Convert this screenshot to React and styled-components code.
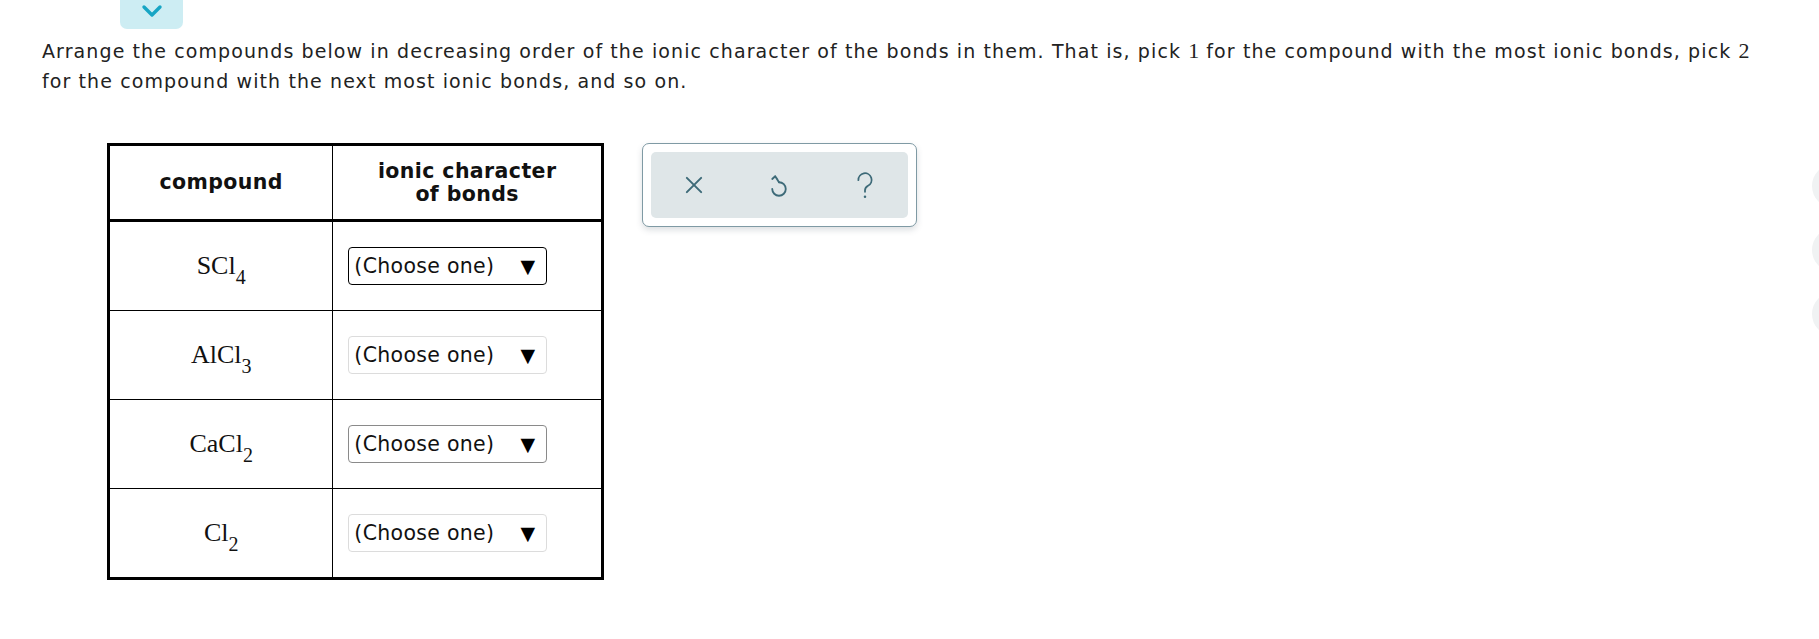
import React from "react";
import styled, { createGlobalStyle } from "styled-components";

const Global = createGlobalStyle`
  html, body { margin: 0; padding: 0; background: #fff; overflow: hidden; }
  body { font-family: "DejaVu Sans", Verdana, sans-serif; color: #222; }
`;

const Page = styled.div`
  display: flex;
  width: 1819px;
  height: 639px;
  overflow: hidden;
`;

const Main = styled.div`
  flex: 1;
  display: flex;
  flex-direction: column;
  padding-left: 42px;
`;

const TopTab = styled.button`
  margin-left: 78px;
  width: 63px;
  height: 29px;
  border: none;
  padding: 0;
  background: #cdedf3;
  border-radius: 0 0 7px 7px;
  display: flex;
  align-items: center;
  justify-content: center;
  padding-bottom: 8px;
`;

const Prompt = styled.p`
  margin: 7px 0 0 0;
  width: 1730px;
  font-size: 19px;
  letter-spacing: 1.1px;
  line-height: 30px;
  color: #222;
`;

const MathNum = styled.span`
  font-family: "Liberation Serif", "Times New Roman", serif;
  font-size: 22px;
  letter-spacing: 0;
`;

const Content = styled.div`
  display: flex;
  align-items: flex-start;
  margin-top: 47px;
  margin-left: 65px;
  gap: 38px;
`;

const Table = styled.table`
  border-collapse: collapse;
  border: 3px solid #000;
  width: 497px;
`;

const HeadCell = styled.th`
  width: ${(p) => p.$w}px;
  height: 73px;
  border: 1px solid #000;
  border-bottom: 3px solid #000;
  font-size: 20.5px;
  letter-spacing: 0.4px;
  font-weight: bold;
  line-height: 23px;
  color: #111;
  text-align: center;
  vertical-align: middle;
  padding: 0;
`;

const Cell = styled.td`
  height: 88px;
  border: 1px solid #000;
  padding: 0;
  vertical-align: middle;
  text-align: ${(p) => (p.$left ? "left" : "center")};
  padding-left: ${(p) => (p.$left ? "15px" : "0")};
`;

const Formula = styled.span`
  font-family: "Liberation Serif", "Times New Roman", serif;
  font-size: 26px;
  color: #111;
  sub {
    font-size: 20px;
    vertical-align: -10px;
    line-height: 0;
  }
`;

const Select = styled.div`
  box-sizing: border-box;
  width: 199px;
  height: 38px;
  display: inline-flex;
  align-items: center;
  justify-content: space-between;
  padding: 0 11px 0 5px;
  border: ${(p) =>
    p.$state === "focus"
      ? "1.5px solid #000"
      : p.$state === "hover"
      ? "1px solid #8a8a8a"
      : "1px solid #dcdcdc"};
  border-radius: 4px;
  background: #fff;
  font-size: 20.5px;
  letter-spacing: 0.3px;
  color: #111;
`;

const Arrow = styled.span`
  font-size: 19px;
  color: #000;
  line-height: 1;
`;

const ToolFrame = styled.div`
  box-sizing: border-box;
  width: 275px;
  height: 84px;
  border: 1px solid #7f9aa4;
  border-radius: 7px;
  background: #fff;
  padding: 8px;
  box-shadow: 0 3px 6px rgba(60, 80, 90, 0.18);
`;

const ToolInner = styled.div`
  height: 100%;
  background: #dfe6e8;
  border-radius: 5px;
  display: grid;
  grid-template-columns: repeat(3, 1fr);
  align-items: center;
  justify-items: center;
`;

const ToolBtn = styled.button`
  border: none;
  background: transparent;
  padding: 0;
  display: flex;
  align-items: center;
  justify-content: center;
  width: 34px;
  height: 36px;
`;

const SideRail = styled.div`
  width: 7px;
  overflow: hidden;
  padding-top: 164px;
  display: flex;
  flex-direction: column;
  gap: 20px;
`;

const SideDot = styled.div`
  flex: none;
  width: 44px;
  height: 44px;
  border-radius: 50%;
  background: #f0f2f3;
`;

const rows = [
  { f: "SCl", s: "4", state: "focus" },
  { f: "AlCl", s: "3", state: "idle" },
  { f: "CaCl", s: "2", state: "hover" },
  { f: "Cl", s: "2", state: "idle" },
];

const ICON = "#3d6a78";

export default function App() {
  return (
    <Page>
      <Global />
      <Main>
        <TopTab aria-label="collapse">
          <svg width="22" height="14" viewBox="0 0 22 14">
            <path d="M3 3 L11 11 L19 3" fill="none" stroke="#17a5c4" strokeWidth="3.4" strokeLinecap="round" strokeLinejoin="round" />
          </svg>
        </TopTab>
        <Prompt>
          Arrange the compounds below in decreasing order of the ionic character of the bonds in them. That is, pick <MathNum>1</MathNum> for the compound with the most ionic bonds, pick <MathNum>2</MathNum> for the compound with the next most ionic bonds, and so on.
        </Prompt>
        <Content>
          <Table>
            <thead>
              <tr>
                <HeadCell $w={223}>compound</HeadCell>
                <HeadCell $w={268}>
                  ionic character
                  <br />
                  of bonds
                </HeadCell>
              </tr>
            </thead>
            <tbody>
              {rows.map((r) => (
                <tr key={r.f + r.s}>
                  <Cell>
                    <Formula>
                      {r.f}
                      <sub>{r.s}</sub>
                    </Formula>
                  </Cell>
                  <Cell $left>
                    <Select $state={r.state}>
                      <span>(Choose one)</span>
                      <Arrow>▼</Arrow>
                    </Select>
                  </Cell>
                </tr>
              ))}
            </tbody>
          </Table>
          <ToolFrame>
            <ToolInner>
              <ToolBtn aria-label="clear">
                <svg width="22" height="22" viewBox="0 0 20 20">
                  <path d="M3.5 3.5 L16.5 16.5 M16.5 3.5 L3.5 16.5" stroke={ICON} strokeWidth="1.8" strokeLinecap="round" />
                </svg>
              </ToolBtn>
              <ToolBtn aria-label="undo">
                <svg width="24" height="31" viewBox="0 0 22 26">
                  <path d="M11 10 A6.2 6.2 0 1 1 4.8 16.2" fill="none" stroke={ICON} strokeWidth="1.7" strokeLinecap="round" />
                  <path d="M11 10 L7.5 4.5 M4.8 7 L7.5 4.5 L9.6 7.6" fill="none" stroke={ICON} strokeWidth="1.7" strokeLinecap="round" strokeLinejoin="round" />
                </svg>
              </ToolBtn>
              <ToolBtn aria-label="help">
                <svg width="24" height="33" viewBox="0 0 20 26">
                  <path d="M4.5 8.5 A5.5 5.5 0 1 1 12.5 13.2 C10.8 14.2 10 15.2 10 17 V18.3" fill="none" stroke={ICON} strokeWidth="1.5" strokeLinecap="round" />
                  <circle cx="10" cy="22.3" r="1.05" fill={ICON} />
                </svg>
              </ToolBtn>
            </ToolInner>
          </ToolFrame>
        </Content>
      </Main>
      <SideRail>
        <SideDot />
        <SideDot />
        <SideDot />
      </SideRail>
    </Page>
  );
}
